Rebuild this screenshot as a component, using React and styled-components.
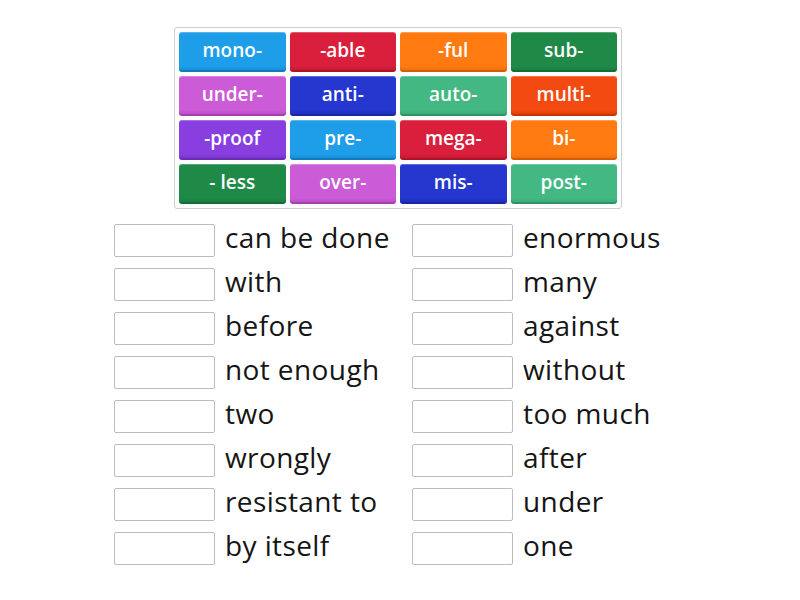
import React from "react";
import styled, { createGlobalStyle } from "styled-components";

const GlobalStyle = createGlobalStyle`
  body {
    margin: 0;
    background: #fff;
    font-family: "Open Sans", "Noto Sans", sans-serif;
  }
`;

const Page = styled.div`
  width: 800px;
  height: 600px;
  padding-top: 27px;
  box-sizing: border-box;
`;

const Bank = styled.div`
  width: 448px;
  margin: 0 auto 0 174px;
  box-sizing: border-box;
  border: 1px solid #cfcfcf;
  border-radius: 3px;
  padding: 4px 4px 4px 4px;
  display: grid;
  grid-template-columns: repeat(4, 1fr);
  gap: 4px 4px;
`;

const Tile = styled.div`
  height: 40px;
  border-radius: 3px;
  background: linear-gradient(
    to bottom,
    ${(p) => p.$c} 0%,
    ${(p) => p.$c} 85%,
    ${(p) => p.$d} 100%
  );
  box-shadow: inset 0 1px 0 rgba(255, 255, 255, 0.25),
    inset 0 -2px 0 rgba(0, 0, 0, 0.12);
  color: #fff;
  font-family: "Open Sans", sans-serif;
  font-weight: 600;
  font-size: 19px;
  display: flex;
  align-items: center;
  justify-content: center;
  padding-bottom: 4px;
  box-sizing: border-box;
`;

const List = styled.div`
  display: grid;
  grid-template-columns: 298px 298px;
  padding-left: 114px;
  margin-top: 15px;
  row-gap: 11px;
`;

const Row = styled.div`
  display: flex;
  align-items: center;
  height: 33px;
`;

const Slot = styled.div`
  width: 101px;
  height: 33px;
  box-sizing: border-box;
  border: 1px solid #bcbcbc;
  border-radius: 2px;
  background: #fff;
  flex-shrink: 0;
`;

const Word = styled.span`
  margin-left: 10px;
  font-size: 28px;
  letter-spacing: 0.4px;
  color: #151515;
  white-space: nowrap;
  line-height: 1;
  padding-bottom: 8px;
`;

const colors = {
  blue: ["#1e9de8", "#1488d4"],
  red: ["#d91f3b", "#c2162f"],
  orange: ["#ff7b12", "#ea6a06"],
  dgreen: ["#1f8a48", "#177a3c"],
  pink: ["#cb5bd6", "#b947c4"],
  navy: ["#2537cf", "#1c2cb8"],
  teal: ["#43b883", "#35a572"],
  rorange: ["#f24a10", "#dc3c06"],
  purple: ["#893fe0", "#7630ca"],
};

const tiles = [
  ["mono-", "blue"],
  ["-able", "red"],
  ["-ful", "orange"],
  ["sub-", "dgreen"],
  ["under-", "pink"],
  ["anti-", "navy"],
  ["auto-", "teal"],
  ["multi-", "rorange"],
  ["-proof", "purple"],
  ["pre-", "blue"],
  ["mega-", "red"],
  ["bi-", "orange"],
  ["- less", "dgreen"],
  ["over-", "pink"],
  ["mis-", "navy"],
  ["post-", "teal"],
];

const left = [
  "can be done",
  "with",
  "before",
  "not enough",
  "two",
  "wrongly",
  "resistant to",
  "by itself",
];

const right = [
  "enormous",
  "many",
  "against",
  "without",
  "too much",
  "after",
  "under",
  "one",
];

export default function App() {
  const rows = [];
  left.forEach((w, i) => {
    rows.push(
      <Row key={"l" + i}>
        <Slot />
        <Word>{w}</Word>
      </Row>
    );
    rows.push(
      <Row key={"r" + i}>
        <Slot />
        <Word>{right[i]}</Word>
      </Row>
    );
  });

  return (
    <Page>
      <GlobalStyle />
      <Bank>
        {tiles.map(([t, c]) => (
          <Tile key={t} $c={colors[c][0]} $d={colors[c][1]}>
            {t}
          </Tile>
        ))}
      </Bank>
      <List>{rows}</List>
    </Page>
  );
}
